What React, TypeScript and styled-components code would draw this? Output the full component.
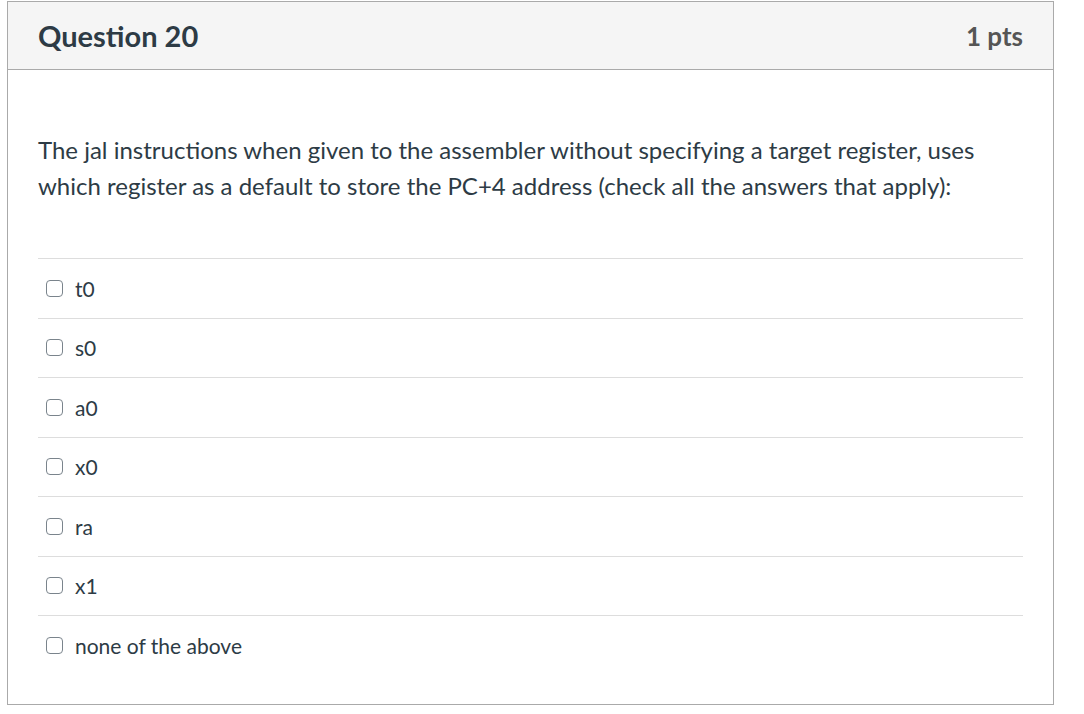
import React from 'react';
import styled, { createGlobalStyle } from 'styled-components';

const GlobalStyle = createGlobalStyle`
  body {
    margin: 0;
    background: #ffffff;
    font-family: Lato, 'Noto Sans', sans-serif;
    color: #2d3b45;
  }
`;

const Page = styled.div`
  padding: 1px 0 0 7px;
`;

const Card = styled.div`
  width: 1047px;
  box-sizing: border-box;
  border: 1px solid #aaaaaa;
`;

const Header = styled.div`
  display: flex;
  align-items: center;
  justify-content: space-between;
  height: 68px;
  box-sizing: border-box;
  padding: 0 30px;
  background: #f5f5f5;
  border-bottom: 1px solid #aaaaaa;
`;

const Title = styled.h2`
  margin: 0;
  font-size: 29px;
  font-weight: 700;
  color: #2d3b45;
`;

const Points = styled.div`
  font-size: 26px;
  font-weight: 700;
  color: #555555;
`;

const Body = styled.div`
  padding: 62px 30px 29px 30px;
`;

const QuestionText = styled.p`
  margin: 0 0 54px 0;
  font-size: 24px;
  line-height: 36px;
  color: #2d3b45;
`;

const AnswerList = styled.div`
  display: flex;
  flex-direction: column;
`;

const AnswerRow = styled.label`
  display: flex;
  align-items: center;
  gap: 12px;
  height: 59.5px;
  box-sizing: border-box;
  padding-left: 8px;
  border-top: 1px solid #dddddd;
  font-size: 21px;
  color: #2d3b45;
`;

const Box = styled.span`
  width: 17px;
  height: 17px;
  box-sizing: border-box;
  border: 1.5px solid #7a848c;
  border-radius: 4px;
  background: #ffffff;
  flex-shrink: 0;
`;

const answers = ['t0', 's0', 'a0', 'x0', 'ra', 'x1', 'none of the above'];

export default function App() {
  return (
    <Page>
      <GlobalStyle />
      <Card>
        <Header>
          <Title>Question 20</Title>
          <Points>1 pts</Points>
        </Header>
        <Body>
          <QuestionText>
            The jal instructions when given to the assembler without specifying a target register, uses which
            register as a default to store the PC+4 address (check all the answers that apply):
          </QuestionText>
          <AnswerList>
            {answers.map((a) => (
              <AnswerRow key={a}>
                <Box />
                <span>{a}</span>
              </AnswerRow>
            ))}
          </AnswerList>
        </Body>
      </Card>
    </Page>
  );
}
